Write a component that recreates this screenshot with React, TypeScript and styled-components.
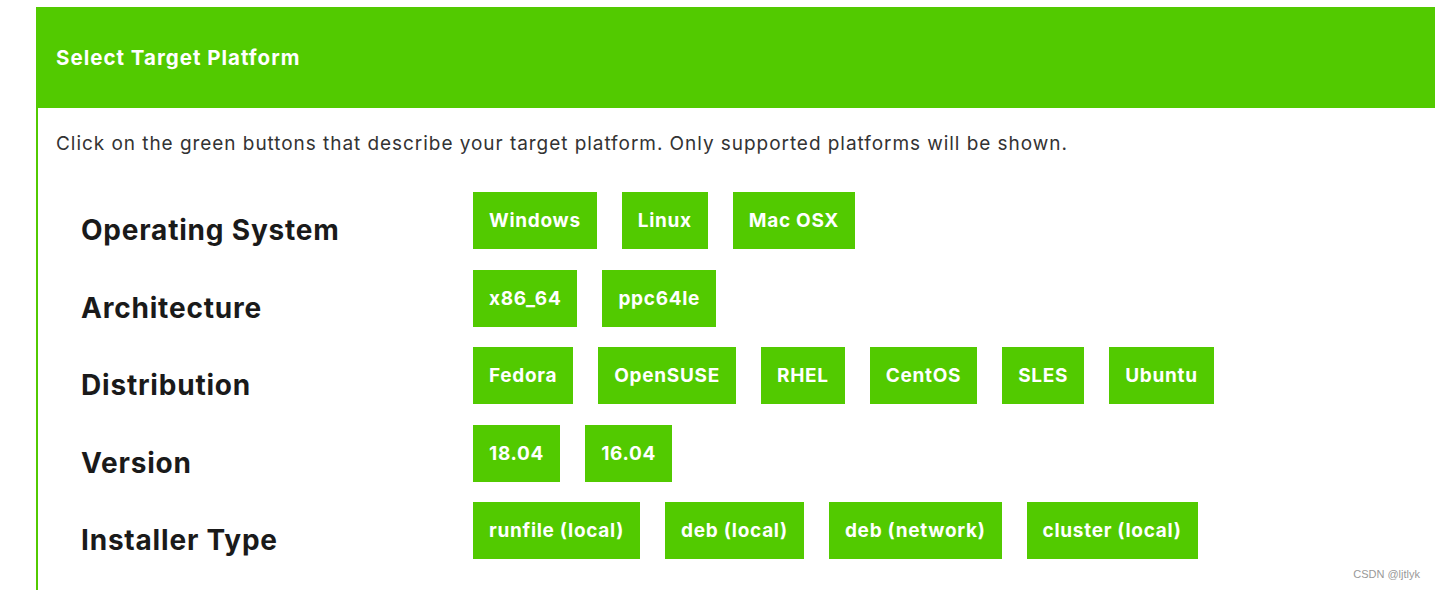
import styled, { createGlobalStyle } from 'styled-components';

const GREEN = '#52ca00';

const GlobalStyle = createGlobalStyle`
  html, body {
    margin: 0;
    padding: 0;
    background: #ffffff;
    font-family: Inter, "Noto Sans", "Liberation Sans", sans-serif;
  }
`;

const Page = styled.div`
  width: 1435px;
  height: 590px;
  padding: 7px 0 0 36px;
  box-sizing: border-box;
  overflow: hidden;
  position: relative;
`;

const Card = styled.section`
  border-left: 2px solid ${GREEN};
  height: 100%;
`;

const Header = styled.header`
  height: 101px;
  margin-left: -2px;
  background: ${GREEN};
  display: flex;
  align-items: center;
  padding: 0 20px;
  font-size: 20.5px;
  letter-spacing: 1px;
  font-weight: 700;
  color: #ffffff;
`;

const Body = styled.div`
  padding: 23px 18px 0;
`;

const Intro = styled.p`
  margin: 0 0 35px;
  font-size: 19px;
  line-height: 26px;
  letter-spacing: 0.95px;
  color: #333333;
`;

const Grid = styled.div`
  display: flex;
  flex-direction: column;
  gap: 20.5px;
  padding-left: 25px;
`;

const Row = styled.div`
  display: grid;
  grid-template-columns: 392px 1fr;
  align-items: start;
`;

const Label = styled.div`
  margin-top: 21px;
  font-size: 28px;
  line-height: 34px;
  letter-spacing: 0.8px;
  font-weight: 700;
  color: #1a1a1a;
`;

const Buttons = styled.div`
  display: flex;
  gap: 25px;
`;

const Choice = styled.button`
  height: 57px;
  padding: 0 16px;
  border: none;
  background: ${GREEN};
  color: #ffffff;
  font-family: inherit;
  font-size: 19px;
  letter-spacing: 0.7px;
  font-weight: 700;
  cursor: pointer;
`;

const Watermark = styled.span`
  position: absolute;
  right: 15px;
  bottom: 10px;
  font-family: "Liberation Sans", sans-serif;
  font-size: 11px;
  color: #999999;
`;

const rows = [
  { label: 'Operating System', options: ['Windows', 'Linux', 'Mac OSX'] },
  { label: 'Architecture', options: ['x86_64', 'ppc64le'] },
  { label: 'Distribution', options: ['Fedora', 'OpenSUSE', 'RHEL', 'CentOS', 'SLES', 'Ubuntu'] },
  { label: 'Version', options: ['18.04', '16.04'] },
  { label: 'Installer Type', options: ['runfile (local)', 'deb (local)', 'deb (network)', 'cluster (local)'] },
];

export default function App() {
  return (
    <>
      <GlobalStyle />
      <Page>
        <Card>
          <Header>Select Target Platform</Header>
          <Body>
            <Intro>
              Click on the green buttons that describe your target platform. Only supported platforms will be shown.
            </Intro>
            <Grid>
              {rows.map(r => (
                <Row key={r.label}>
                  <Label>{r.label}</Label>
                  <Buttons>
                    {r.options.map(o => (
                      <Choice key={o}>{o}</Choice>
                    ))}
                  </Buttons>
                </Row>
              ))}
            </Grid>
          </Body>
        </Card>
        <Watermark>CSDN @ljtlyk</Watermark>
      </Page>
    </>
  );
}
